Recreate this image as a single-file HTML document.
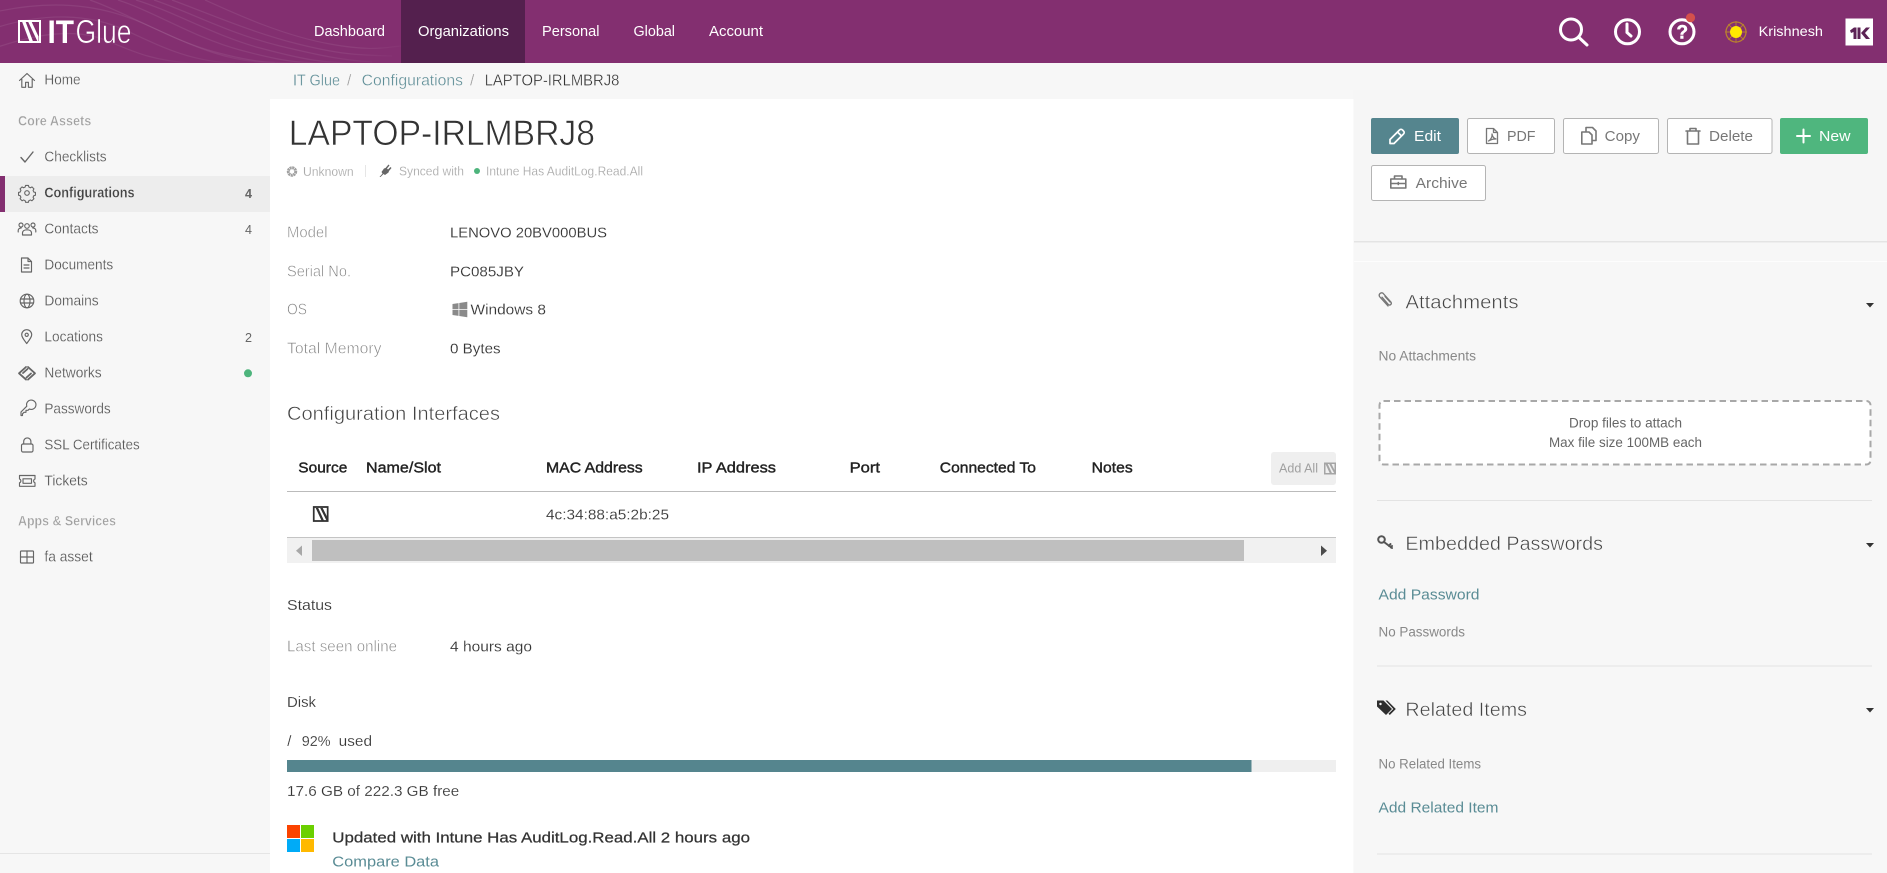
<!DOCTYPE html>
<html lang="en">
<head>
<meta charset="utf-8">
<title>LAPTOP-IRLMBRJ8 - IT Glue</title>
<style>
html,body{margin:0;padding:0;width:1887px;height:873px;overflow:hidden;background:#f7f7f7}
svg{display:block;position:absolute;left:0;top:0}
text{font-family:"Liberation Sans",sans-serif;white-space:pre}
.nav{font-size:15px;fill:#fff}
.side{font-size:14.5px;fill:#555;stroke:#f7f7f7;stroke-width:.2px}
.sh{font-size:13.5px;fill:#a0a0a0;font-weight:bold;stroke:#f7f7f7;stroke-width:.35px}
.count{font-size:13px;fill:#666}
.crumb{font-size:15.5px;stroke:#f7f7f7;stroke-width:.3px}
.lbl{font-size:15.5px;fill:#808080;stroke:#fff;stroke-width:.5px}
.val{font-size:15px;fill:#333;stroke:#fff;stroke-width:.15px}
.th{font-size:15px;fill:#222;stroke:#222;stroke-width:.4px}
.sub{font-size:12.5px;fill:#a9a9a9;stroke:#fff;stroke-width:.15px}
.h3{font-size:19px;fill:#444;stroke:#f7f7f7;stroke-width:.45px}
.note{font-size:13.5px;fill:#888}
.lnk{font-size:15px;fill:#5a8c95}
.btn{font-size:15px;fill:#777}
.ic{fill:none;stroke:#666;stroke-width:1.15;stroke-linecap:round;stroke-linejoin:round}
.bi{fill:none;stroke:#777;stroke-width:1.6;stroke-linecap:round;stroke-linejoin:round}
</style>
</head>
<body>
<svg xmlns="http://www.w3.org/2000/svg" width="1887" height="873" viewBox="0 0 1887 873">
<defs>
<linearGradient id="fade" x1="0" y1="0" x2="1" y2="0"><stop offset="0" stop-color="#fff" stop-opacity=".08"/><stop offset=".8" stop-color="#fff" stop-opacity=".07"/><stop offset="1" stop-color="#fff" stop-opacity=".02"/></linearGradient>
</defs>

<!-- page areas -->
<rect width="1887" height="873" fill="#f7f7f7"/>
<rect x="270" y="99" width="1084" height="774" fill="#fff"/>
<rect x="1353.500" y="90" width="534" height="783" fill="#f6f6f6"/>
<rect x="1354" y="241" width="533" height="1.5" fill="#e4e4e4"/>
<rect x="1354" y="242.500" width="533" height="18.500" fill="#f7f7f7"/>
<rect x="1354" y="261" width="533" height="1" fill="#fdfdfd"/>
<rect x="1354" y="262" width="533" height="611" fill="#f7f7f7"/>

<!-- header -->
<rect width="1887" height="63" fill="#832f70"/>
<g fill="none" stroke="url(#fade)" stroke-width="1.2">
<path d="M-5 12C50 0 95 4 135 20S215 62 275 63"/>
<path d="M-5 28C45 12 90 14 125 30S190 62 235 63"/>
<path d="M-5 48C35 34 75 28 105 40S150 60 190 63"/>
<path d="M90 0C130 14 170 40 215 52S270 62 300 63"/>
<path d="M118 0C155 12 195 38 240 50S300 63 330 63"/>
<path d="M136 0C175 12 215 36 260 48S320 62 350 63"/>
<path d="M154 0C190 12 230 34 280 46S345 60 372 62"/>
<path d="M172 0C205 12 250 32 298 44S365 55 392 56"/>
<path d="M205 0C240 16 285 36 330 44S385 47 402 46"/>
</g>
<rect x="401" y="0" width="124" height="63" fill="#54204e"/>

<!-- logo -->
<g>
<rect x="19" y="21" width="21" height="21" fill="none" stroke="#fff" stroke-width="2"/>
<path d="M22 21.500h3.500l7.500 20h-3.500zM28 21.500h3.500l7 15v5h-1z" fill="#fff"/>
<text x="47.500" y="43" font-size="32" font-weight="bold" fill="#fff" textLength="26.500" lengthAdjust="spacingAndGlyphs">IT</text>
<text x="75.500" y="43" font-size="33" fill="#fff" stroke="#832f70" stroke-width=".6" textLength="56" lengthAdjust="spacingAndGlyphs">Glue</text>
</g>

<!-- top nav -->
<text class="nav" x="314" y="36" textLength="71" lengthAdjust="spacingAndGlyphs">Dashboard</text>
<text class="nav" x="418" y="36" textLength="91" lengthAdjust="spacingAndGlyphs">Organizations</text>
<text class="nav" x="542" y="36" textLength="57.500" lengthAdjust="spacingAndGlyphs">Personal</text>
<text class="nav" x="633.500" y="36" textLength="41.500" lengthAdjust="spacingAndGlyphs">Global</text>
<text class="nav" x="709" y="36" textLength="54" lengthAdjust="spacingAndGlyphs">Account</text>

<!-- header right icons -->
<g fill="none" stroke="#fff" stroke-width="3" stroke-linecap="round">
<circle cx="1571" cy="29.500" r="10.500"/><path d="M1579 37.500l8 7.500"/>
<circle cx="1627.500" cy="31.800" r="12"/><path d="M1627 24v8.500l4 3.500"/>
<circle cx="1682" cy="31.800" r="12"/>
</g>
<text x="1676.500" y="38.500" font-size="19" font-weight="bold" fill="#fff" stroke="#fff" stroke-width=".5">?</text>
<circle cx="1690.500" cy="17.700" r="4.600" fill="#d4504c"/>
<g>
<circle cx="1736" cy="32" r="10" fill="none" stroke="#b9802f" stroke-width="1.300"/>
<path d="M1725 32h22M1736 21v22M1728.200 24.200l15.600 15.600M1743.800 24.200l-15.600 15.600" stroke="#b9802f" stroke-width=".9"/>
<circle cx="1736" cy="32" r="6" fill="#ffe900"/>
</g>
<text x="1758.600" y="36" font-size="14" fill="#fff" textLength="64.400" lengthAdjust="spacingAndGlyphs">Krishnesh</text>
<rect x="1845.500" y="18.500" width="27.500" height="27" fill="#fff"/>
<path d="M1850 30.500l4-3h2.500V39h-3V32l-2.500 1zM1857.500 27.500h3V39h-3zM1861 33l5-5.500h4l-5 5.500 5 6h-4z" fill="#5c2255"/>

<!-- sidebar -->
<rect x="0" y="176" width="270" height="36" fill="#ededed"/>
<rect x="0" y="176" width="5" height="36" fill="#832f70"/>
<rect x="0" y="853" width="270" height="1" fill="#e5e5e5"/>

<text class="side" x="44.400" y="84.500" textLength="36.200" lengthAdjust="spacingAndGlyphs">Home</text>
<text class="sh" x="18" y="125.500" textLength="73.300" lengthAdjust="spacingAndGlyphs">Core Assets</text>
<text class="side" x="44.400" y="161.500" textLength="62.200" lengthAdjust="spacingAndGlyphs">Checklists</text>
<text class="side" x="44.400" y="197.500" font-weight="bold" style="fill:#444" textLength="90.200" lengthAdjust="spacingAndGlyphs">Configurations</text>
<text class="side" x="44.400" y="233.500" textLength="54.100" lengthAdjust="spacingAndGlyphs">Contacts</text>
<text class="side" x="44.400" y="269.500" textLength="68.800" lengthAdjust="spacingAndGlyphs">Documents</text>
<text class="side" x="44.400" y="305.500" textLength="54.300" lengthAdjust="spacingAndGlyphs">Domains</text>
<text class="side" x="44.400" y="341.500" textLength="58.600" lengthAdjust="spacingAndGlyphs">Locations</text>
<text class="side" x="44.400" y="377.500" textLength="57.300" lengthAdjust="spacingAndGlyphs">Networks</text>
<text class="side" x="44.400" y="413.500" textLength="66.300" lengthAdjust="spacingAndGlyphs">Passwords</text>
<text class="side" x="44.400" y="449.500" textLength="95.300" lengthAdjust="spacingAndGlyphs">SSL Certificates</text>
<text class="side" x="44.400" y="485.500" textLength="43.300" lengthAdjust="spacingAndGlyphs">Tickets</text>
<text class="sh" x="18" y="525.500" textLength="98" lengthAdjust="spacingAndGlyphs">Apps &amp; Services</text>
<text class="side" x="44.400" y="561.500" textLength="48.300" lengthAdjust="spacingAndGlyphs">fa asset</text>
<text class="count" x="245" y="198" font-weight="bold" textLength="7" lengthAdjust="spacingAndGlyphs">4</text>
<text class="count" x="245" y="234" textLength="7" lengthAdjust="spacingAndGlyphs">4</text>
<text class="count" x="245" y="342" textLength="7" lengthAdjust="spacingAndGlyphs">2</text>
<circle cx="248" cy="373.300" r="4" fill="#4db47c"/>

<!-- sidebar icons -->
<g class="ic">
<path d="M19.500 80.500L27 73.500l7.500 7M21.800 79v8.300h3.800v-5h2.800v5h3.800V79"/>
<path d="M21 157.500l4 4.500 8-10" stroke-width="1.400"/>
<circle cx="27" cy="193" r="2.300"/><path d="M25.500 186.500h3l.4 1.700 1.700.8 1.600-.9 2.100 2.100-.9 1.600.8 1.700 1.700.4v3l-1.700.4-.8 1.700.9 1.600-2.100 2.100-1.600-.9-1.700.8-.4 1.700h-3l-.4-1.700-1.700-.8-1.600.9-2.100-2.100.9-1.600-.8-1.700-1.700-.4v-3l1.700-.4.8-1.700-.9-1.600 2.100-2.100 1.600.9 1.700-.8z" transform="translate(27 193) scale(.95) translate(-27 -194.500)"/>
<circle cx="27" cy="226" r="2.300"/><circle cx="21" cy="225" r="2"/><circle cx="33" cy="225" r="2"/>
<path d="M22.500 235v-2c0-2 2-3.200 4.500-3.200s4.500 1.200 4.500 3.200v2zM18.200 232v-1.500c0-1.500 1.200-2.500 3-2.500M35.800 232v-1.500c0-1.500-1.200-2.500-3-2.500"/>
<path d="M21.500 258h6.500l3.500 3.500V272h-10zM28 258v3.500h3.500M24 265h5M24 268h5"/>
<circle cx="27" cy="301" r="6.800"/><ellipse cx="27" cy="301" rx="3" ry="6.800"/><path d="M20.500 299h13M20.500 303h13"/>
<path d="M26.700 343.500c-3-4-5-6.500-5-8.800a5 5 0 0 1 10 0c0 2.300-2 4.800-5 8.800z"/><circle cx="26.700" cy="334.800" r="1.600"/>
<path d="M26 367l-7 6.300 7 6.300M28 367l7 6.300-7 6.300M23 373l4.500-4M31 373.500l-4.500 4" stroke-width="1.800"/>
<path d="M21 415.500v-3.500l5.800-5.800a4.700 4.700 0 1 1 2.500 2.800l-1.300 1.300h-2v2h-2l-1.500 1.500v1.700z"/>
<rect x="21.500" y="444" width="11.500" height="8" rx="1.500"/><path d="M23.700 444v-2.500a3.600 3.600 0 0 1 7.200 0v2.500"/>
<path d="M19.500 475.500h15.500v3.500a2 2 0 0 0 0 3.800v3.500H19.500v-3.500a2 2 0 0 0 0-3.800zM23 478.800h8.500v4.500H23z"/>
<rect x="20.500" y="551" width="13" height="12" rx=".8"/><path d="M20.500 557h13M27 551v12"/>
</g>

<!-- breadcrumbs -->
<text class="crumb" x="293" y="85.500" fill="#5e8d96" textLength="47" lengthAdjust="spacingAndGlyphs">IT Glue</text>
<text class="crumb" x="347" y="85.500" fill="#999">/</text>
<text class="crumb" x="361.700" y="85.500" fill="#5e8d96" textLength="101.300" lengthAdjust="spacingAndGlyphs">Configurations</text>
<text class="crumb" x="470" y="85.500" fill="#999">/</text>
<text class="crumb" x="484.700" y="85.500" fill="#333" textLength="134.700" lengthAdjust="spacingAndGlyphs">LAPTOP-IRLMBRJ8</text>

<!-- title -->
<text x="288.800" y="145" font-size="35.500" fill="#333" stroke="#fff" stroke-width=".6" textLength="306.200" lengthAdjust="spacingAndGlyphs">LAPTOP-IRLMBRJ8</text>

<!-- sub meta -->
<circle cx="292" cy="171.500" r="3.700" fill="none" stroke="#a0a0a0" stroke-width="3" stroke-dasharray="2 .5"/>
<text class="sub" x="303" y="176" textLength="50.600" lengthAdjust="spacingAndGlyphs">Unknown</text>
<rect x="365" y="165" width="1" height="12" fill="#e6e6e6"/>
<path d="M379.500 177l3-3.500-1-1.500 2.500-3.500 1.500-.5 3-3.500 1 1-2.500 3 1 1 2.500-2.500 1 1-2.500 3-.5 1.500-3.500 2.500-1.500-1-3 3z" fill="#666"/>
<text class="sub" x="399" y="175.500" textLength="65" lengthAdjust="spacingAndGlyphs">Synced with</text>
<circle cx="477" cy="171" r="3" fill="#4db47c"/>
<text class="sub" x="486" y="175.500" textLength="157" lengthAdjust="spacingAndGlyphs">Intune Has AuditLog.Read.All</text>

<!-- fields -->
<text class="lbl" x="287" y="237.500" textLength="40.500" lengthAdjust="spacingAndGlyphs">Model</text>
<text class="val" x="450" y="237.500" textLength="157" lengthAdjust="spacingAndGlyphs">LENOVO 20BV000BUS</text>
<text class="lbl" x="287" y="276.500" textLength="64" lengthAdjust="spacingAndGlyphs">Serial No.</text>
<text class="val" x="450" y="276.500" textLength="74" lengthAdjust="spacingAndGlyphs">PC085JBY</text>
<text class="lbl" x="287" y="314.500" textLength="20" lengthAdjust="spacingAndGlyphs">OS</text>
<path d="M452.500 304l6-.9v6h-6zM459.300 303l8-1.200v7.300h-8zM452.500 309.900h6v6l-6-.9zM459.300 309.900h8v7.300l-8-1.200z" fill="#8a8a8a"/>
<text class="val" x="470.500" y="314.500" textLength="75.500" lengthAdjust="spacingAndGlyphs">Windows 8</text>
<text class="lbl" x="287" y="353.500" textLength="94.500" lengthAdjust="spacingAndGlyphs">Total Memory</text>
<text class="val" x="450" y="353.500" textLength="50.600" lengthAdjust="spacingAndGlyphs">0 Bytes</text>

<!-- config interfaces -->
<text x="287" y="420" font-size="19" fill="#444" stroke="#fff" stroke-width=".45" textLength="213" lengthAdjust="spacingAndGlyphs">Configuration Interfaces</text>
<text class="th" x="298.300" y="472.500" textLength="49" lengthAdjust="spacingAndGlyphs">Source</text>
<text class="th" x="366" y="472.500" textLength="75" lengthAdjust="spacingAndGlyphs">Name/Slot</text>
<text class="th" x="546" y="472.500" textLength="96.700" lengthAdjust="spacingAndGlyphs">MAC Address</text>
<text class="th" x="697" y="472.500" textLength="79" lengthAdjust="spacingAndGlyphs">IP Address</text>
<text class="th" x="849.600" y="472.500" textLength="30.400" lengthAdjust="spacingAndGlyphs">Port</text>
<text class="th" x="939.800" y="472.500" textLength="96.200" lengthAdjust="spacingAndGlyphs">Connected To</text>
<text class="th" x="1091.700" y="472.500" textLength="41" lengthAdjust="spacingAndGlyphs">Notes</text>
<rect x="1271" y="452" width="65" height="33" rx="3" fill="#efefef"/>
<text x="1279" y="472.500" font-size="12.500" fill="#a0a0a0" textLength="39" lengthAdjust="spacingAndGlyphs">Add All</text>
<svg x="1324" y="462" width="12" height="13" viewBox="0 0 16 16">
<rect x="1" y="1" width="14" height="14" fill="none" stroke="#a5a5a5" stroke-width="2"/><path d="M2 2h3l6 13H8zM7 2h3l5 10v3h-1z" fill="#a5a5a5"/></svg>
<rect x="287" y="491" width="1049" height="1" fill="#bbb"/>
<svg x="312.700" y="506" width="16" height="16" viewBox="0 0 16 16">
<rect x="1" y="1" width="14" height="14" fill="none" stroke="#333" stroke-width="1.800"/><path d="M3 2h2.500l6 13H9zM7.500 2H10l5 10v3h-1z" fill="#333"/></svg>
<text class="val" x="546" y="519.500" textLength="123" lengthAdjust="spacingAndGlyphs">4c:34:88:a5:2b:25</text>
<rect x="287" y="537" width="1049" height="1" fill="#c4c4c4"/>
<rect x="287" y="538" width="1049" height="25" fill="#f1f1f1"/>
<rect x="312" y="540" width="932" height="21" fill="#bfbfbf"/>
<path d="M302 545.500v10.500l-6-5.200z" fill="#a8a8a8"/>
<path d="M1321 545.500v10.500l6-5.200z" fill="#4c4c4c"/>

<!-- status -->
<text class="val" x="287" y="610" textLength="45" lengthAdjust="spacingAndGlyphs">Status</text>
<text class="lbl" x="287" y="651.500" textLength="110" lengthAdjust="spacingAndGlyphs">Last seen online</text>
<text class="val" x="450" y="651.500" textLength="82" lengthAdjust="spacingAndGlyphs">4 hours ago</text>
<text class="val" x="287" y="707" textLength="29" lengthAdjust="spacingAndGlyphs">Disk</text>
<text class="val" x="287.300" y="746">/</text>
<text class="val" x="301.700" y="746" textLength="28.800" lengthAdjust="spacingAndGlyphs">92%</text>
<text class="val" x="338.700" y="746" textLength="33.300" lengthAdjust="spacingAndGlyphs">used</text>
<rect x="287" y="760" width="1049" height="12" fill="#efefef"/>
<rect x="287" y="760" width="964.500" height="12" fill="#55858e"/>
<text class="val" x="287" y="796" textLength="172.300" lengthAdjust="spacingAndGlyphs">17.6 GB of 222.3 GB free</text>

<!-- sync -->
<rect x="287" y="825" width="13" height="13" fill="#fb4300"/>
<rect x="301" y="825" width="13" height="13" fill="#6bd000"/>
<rect x="287" y="839" width="13" height="13" fill="#00abf7"/>
<rect x="301" y="839" width="13" height="13" fill="#ffb900"/>
<text x="332.300" y="842.700" font-size="15" fill="#333" stroke="#333" stroke-width=".25" textLength="417.700" lengthAdjust="spacingAndGlyphs">Updated with Intune Has AuditLog.Read.All 2 hours ago</text>
<text class="lnk" x="332.300" y="866.700" textLength="106.700" lengthAdjust="spacingAndGlyphs">Compare Data</text>

<!-- action buttons -->
<g fill="#fff" stroke="#b4b4b4" stroke-width="1">
<rect x="1467.500" y="118.500" width="87" height="35" rx="2"/>
<rect x="1563.500" y="118.500" width="95" height="35" rx="2"/>
<rect x="1667.500" y="118.500" width="104.500" height="35" rx="2"/>
<rect x="1371.500" y="165.500" width="114" height="35" rx="2"/>
</g>
<rect x="1371" y="118" width="88" height="36" rx="2" fill="#55858e"/>
<rect x="1780" y="118" width="88" height="36" rx="2" fill="#4fb67e"/>
<path d="M1390 143.500v-4l9.500-9.500a2 2 0 0 1 3 0l1 1a2 2 0 0 1 0 3l-9.500 9.500zM1397.500 132l4.500 4.500" fill="none" stroke="#fff" stroke-width="1.700" stroke-linejoin="round"/>
<text x="1414" y="141" font-size="15" fill="#fff" textLength="27" lengthAdjust="spacingAndGlyphs">Edit</text>
<path class="bi" d="M1486.500 128.500h7l4 4v11h-11zM1493.500 128.500v4h4M1488.500 141c2.500-1.500 4-4.500 3.500-7 .5 3 2 4.500 4 5-2.500-.2-5 .5-7.500 2z" style="stroke-width:1.300"/>
<text class="btn" x="1507" y="141" textLength="28.500" lengthAdjust="spacingAndGlyphs">PDF</text>
<path class="bi" d="M1586 132v-4.500h6.500l3.500 3.500v9.500h-4M1581.800 132h7.200l3 3v9h-10.200z"/>
<text class="btn" x="1604.700" y="141" textLength="35.300" lengthAdjust="spacingAndGlyphs">Copy</text>
<path class="bi" d="M1686 131h14M1690 131v-2.500h6v2.500M1687.500 131v13h11v-13"/>
<text class="btn" x="1709" y="141" textLength="44" lengthAdjust="spacingAndGlyphs">Delete</text>
<path d="M1803.500 129.500v13M1797 136h13" stroke="#fff" stroke-width="2" stroke-linecap="round"/>
<text x="1819" y="141" font-size="15" fill="#fff" textLength="31.500" lengthAdjust="spacingAndGlyphs">New</text>
<path class="bi" d="M1390.800 179h15v9h-15zM1394.500 179v-3h7.500v3M1390.800 183.500h15M1398.300 182.500v2"/>
<text class="btn" x="1415.700" y="188" textLength="51.800" lengthAdjust="spacingAndGlyphs">Archive</text>

<!-- right: attachments -->
<path d="M1388 306l-8.500-9.500a2.500 2.500 0 0 1 3.500-3.300l8 9a1.800 1.800 0 0 1-2.500 2.500l-6.500-7.500M1385 296.500l5 5.500" fill="none" stroke="#777" stroke-width="1.300" stroke-linecap="round"/>
<text class="h3" x="1405.400" y="308.300" textLength="113.200" lengthAdjust="spacingAndGlyphs">Attachments</text>
<path d="M1866 303h8l-4 4.500z" fill="#333"/>
<text class="note" x="1378.500" y="360.500" textLength="97.500" lengthAdjust="spacingAndGlyphs">No Attachments</text>
<rect x="1379.500" y="401" width="491" height="63.500" rx="4" fill="#fff" stroke="#a8a8a8" stroke-width="2" stroke-dasharray="6.500 4"/>
<text x="1569" y="427.700" font-size="14" fill="#666" textLength="113" lengthAdjust="spacingAndGlyphs">Drop files to attach</text>
<text x="1549" y="447" font-size="14" fill="#666" textLength="153" lengthAdjust="spacingAndGlyphs">Max file size 100MB each</text>
<rect x="1377" y="500" width="495" height="1" fill="#e3e3e3"/>

<!-- embedded passwords -->
<g fill="none" stroke="#555" stroke-linecap="round">
<circle cx="1381.500" cy="539.500" r="3.300" stroke-width="2"/>
<path d="M1384 542l8 6M1389 546l1.500-2M1391 547.500l1-1.500" stroke-width="2"/>
</g>
<text class="h3" x="1405.400" y="550" textLength="197.600" lengthAdjust="spacingAndGlyphs">Embedded Passwords</text>
<path d="M1866 543h8l-4 4.500z" fill="#333"/>
<text class="lnk" x="1378.500" y="599.300" textLength="101" lengthAdjust="spacingAndGlyphs">Add Password</text>
<text class="note" x="1378.500" y="636.700" textLength="86.500" lengthAdjust="spacingAndGlyphs">No Passwords</text>
<rect x="1377" y="665.500" width="495" height="1" fill="#e3e3e3"/>

<!-- related items -->
<path d="M1377 700.500h6.500l8.500 8.500-6 6-9-8.500z" fill="#2f2f2f"/>
<path d="M1385.500 700.500h1.800l8.500 8.500-6 6-1.300-1.200 4.800-4.800z" fill="#2f2f2f"/>
<circle cx="1380.500" cy="704" r="1.200" fill="#f7f7f7"/>
<text class="h3" x="1405.400" y="716" textLength="121.600" lengthAdjust="spacingAndGlyphs">Related Items</text>
<path d="M1866 708h8l-4 4.500z" fill="#333"/>
<text class="note" x="1378.500" y="768.500" textLength="102.500" lengthAdjust="spacingAndGlyphs">No Related Items</text>
<text class="lnk" x="1378.500" y="812.300" textLength="120" lengthAdjust="spacingAndGlyphs">Add Related Item</text>
<rect x="1377" y="853.500" width="495" height="1" fill="#e3e3e3"/>
</svg>
</body>
</html>
